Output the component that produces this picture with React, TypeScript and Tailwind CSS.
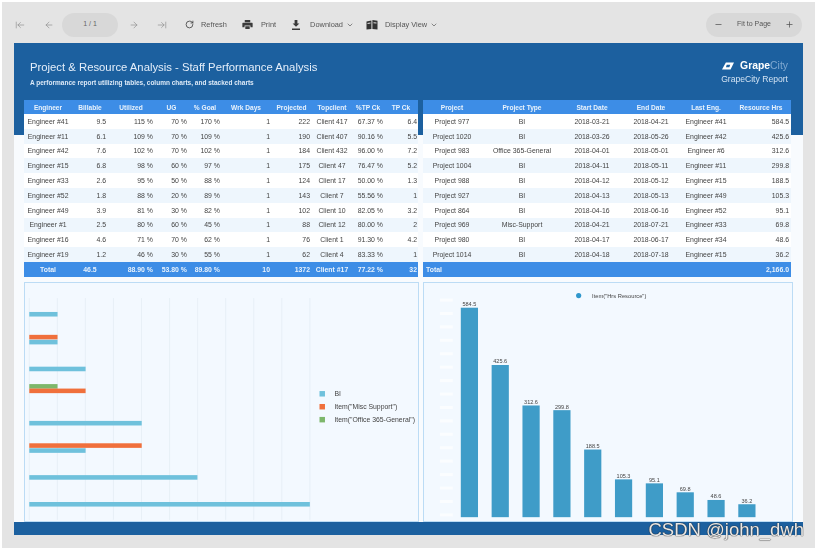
import { ArrowLeft, ArrowLeftToLine, ArrowRight, ArrowRightToLine, ChevronDown, Minus, Plus, RotateCw } from "lucide-react";

const leftCols = "grid grid-cols-[48px_36px_46px_35px_32px_50px_41px_40px_32px_34px]";
const rightCols = "grid grid-cols-[58px_82px_58px_60px_50px_60px]";

const engineers = [
  ["Engineer #41", "9.5", "115 %", "70 %", "170 %", "1", "222", "Client 417", "67.37 %", "6.4"],
  ["Engineer #11", "6.1", "109 %", "70 %", "109 %", "1", "190", "Client 407", "90.16 %", "5.5"],
  ["Engineer #42", "7.6", "102 %", "70 %", "102 %", "1", "184", "Client 432", "96.00 %", "7.2"],
  ["Engineer #15", "6.8", "98 %", "60 %", "97 %", "1", "175", "Client 47", "76.47 %", "5.2"],
  ["Engineer #33", "2.6", "95 %", "50 %", "88 %", "1", "124", "Client 17", "50.00 %", "1.3"],
  ["Engineer #52", "1.8", "88 %", "20 %", "89 %", "1", "143", "Client 7", "55.56 %", "1"],
  ["Engineer #49", "3.9", "81 %", "30 %", "82 %", "1", "102", "Client 10", "82.05 %", "3.2"],
  ["Engineer #1", "2.5", "80 %", "60 %", "45 %", "1", "88", "Client 12", "80.00 %", "2"],
  ["Engineer #16", "4.6", "71 %", "70 %", "62 %", "1", "76", "Client 1", "91.30 %", "4.2"],
  ["Engineer #19", "1.2", "46 %", "30 %", "55 %", "1", "62", "Client 4", "83.33 %", "1"],
];

const projects = [
  ["Project 977", "BI", "2018-03-21", "2018-04-21", "Engineer #41", "584.5"],
  ["Project 1020", "BI", "2018-03-26", "2018-05-26", "Engineer #42", "425.6"],
  ["Project 983", "Office 365-General", "2018-04-01", "2018-05-01", "Engineer #6", "312.6"],
  ["Project 1004", "BI", "2018-04-11", "2018-05-11", "Engineer #11", "299.8"],
  ["Project 988", "BI", "2018-04-12", "2018-05-12", "Engineer #15", "188.5"],
  ["Project 927", "BI", "2018-04-13", "2018-05-13", "Engineer #49", "105.3"],
  ["Project 864", "BI", "2018-04-16", "2018-06-16", "Engineer #52", "95.1"],
  ["Project 969", "Misc-Support", "2018-04-21", "2018-07-21", "Engineer #33", "69.8"],
  ["Project 980", "BI", "2018-04-17", "2018-06-17", "Engineer #34", "48.6"],
  ["Project 1014", "BI", "2018-04-18", "2018-07-18", "Engineer #15", "36.2"],
];

const leftHead = ["Engineer", "Billable", "Utilized", "UG", "% Goal", "Wrk Days", "Projected", "Topclient", "%TP Ck", "TP Ck"];
const rightHead = ["Project", "Project Type", "Start Date", "End Date", "Last Eng.", "Resource Hrs"];
const leftAlign = ["text-center", "text-right pr-[2px]", "text-right pr-[1px]", "text-right pr-[2px]", "text-right pr-[1px]", "text-right pr-[1px]", "text-right pr-[2px]", "text-center", "text-right pr-[1px]", "text-right pr-[1px]"];
const rightAlign = ["text-center", "text-center", "text-center", "text-center", "text-center", "text-right pr-[2px]"];

const hbars = [
  { y: 311, w: 28.4, c: "#6fc1dc" },
  { y: 334, w: 28.4, c: "#f0703c" },
  { y: 339, w: 28.4, c: "#6fc1dc" },
  { y: 366, w: 56.6, c: "#6fc1dc" },
  { y: 383.5, w: 28.4, c: "#7db76b" },
  { y: 388, w: 56.6, c: "#f0703c" },
  { y: 420.5, w: 113, c: "#6fc1dc" },
  { y: 443, w: 113, c: "#f0703c" },
  { y: 448, w: 56.6, c: "#6fc1dc" },
  { y: 475, w: 169, c: "#6fc1dc" },
  { y: 502, w: 282, c: "#6fc1dc" },
];

const vbars = [
  { x: 460, top: 306.7, label: "584.5" },
  { x: 491, top: 364.3, label: "425.6" },
  { x: 522, top: 405, label: "312.6" },
  { x: 553, top: 409.7, label: "299.8" },
  { x: 584, top: 449.3, label: "188.5" },
  { x: 615, top: 479.3, label: "105.3" },
  { x: 646, top: 483.3, label: "95.1" },
  { x: 677, top: 492.3, label: "69.8" },
  { x: 708, top: 500, label: "48.6" },
  { x: 739, top: 504.3, label: "36.2" },
];

function PrinterIcon() {
  return (
    <svg width="11" height="11" viewBox="0 0 12 12" fill="#3a3a3a">
      <path d="M3 1h6v2.5H3zM1 4.2h10a.6.6 0 0 1 .6.6V9H9.2V7.2H2.8V9H.4V4.8a.6.6 0 0 1 .6-.6zM3.6 8h4.8v3H3.6z" />
    </svg>
  );
}

function DownloadIcon() {
  return (
    <svg width="10" height="12" viewBox="0 0 10 12" fill="#3a3a3a">
      <path d="M3.6 1h2.8v3.4H8.4L5 7.8 1.6 4.4h2zM1 9.6h8V11H1z" />
    </svg>
  );
}

function ViewIcon() {
  return (
    <svg width="12" height="11" viewBox="0 0 12 11" fill="#333">
      <path d="M0.5 2.5 5.4 1.5V10L0.5 10.5zM6.4 1 11.5 1.8V10.5L6.4 10zM1.5 4v1l3-.4v-1zM7.5 3.2v1l3 .3v-1z" fillRule="evenodd" />
    </svg>
  );
}

function Toolbar() {
  return (
    <div className="flex h-[41px] items-center pl-[13px] pr-[13px] pt-[4px] text-[7.4px] text-[#555] blur-[0.5px]">
      <ArrowLeftToLine size={10} className="mr-[19px] text-[#888]" strokeWidth={1.5} />
      <ArrowLeft size={10} className="mr-[8px] text-[#888]" strokeWidth={1.5} />
      <div className="mr-[11px] flex h-[24px] w-[56px] items-center justify-center rounded-full bg-[#d8d8d8] text-[7px] text-[#666]">1 / 1</div>
      <ArrowRight size={10} className="mr-[18px] text-[#888]" strokeWidth={1.5} />
      <ArrowRightToLine size={10} className="mr-[18px] text-[#888]" strokeWidth={1.5} />
      <RotateCw size={9} className="mr-[7px] text-[#333]" strokeWidth={2} />
      <span className="mr-[15px]">Refresh</span>
      <PrinterIcon />
      <span className="ml-[8px] mr-[15px]">Print</span>
      <DownloadIcon />
      <span className="ml-[9px]">Download</span>
      <ChevronDown size={8} className="ml-[3px] mr-[12px]" strokeWidth={2} />
      <ViewIcon />
      <span className="ml-[7px]">Display View</span>
      <ChevronDown size={8} className="ml-[3px]" strokeWidth={2} />
      <div className="ml-auto flex h-[24px] w-[96px] items-center justify-between rounded-full bg-[#d8d8d8] px-[8px] text-[7px] text-[#555]">
        <Minus size={9} strokeWidth={2} />
        <span>Fit to Page</span>
        <Plus size={9} strokeWidth={2} />
      </div>
    </div>
  );
}

function Banner() {
  return (
    <div className="flex h-[92px] items-start justify-between bg-[#1c609f] pl-[16px] pr-[15px] pt-[17px] text-white">
      <div>
        <div className="text-[11.3px] leading-[14px] text-[#e4eefa]">Project &amp; Resource Analysis - Staff Performance Analysis</div>
        <div className="mt-[5px] text-[6.5px] font-bold leading-[8px] text-[#dce9f7]">A performance report utilizing tables, column charts, and stacked charts</div>
      </div>
      <div className="flex flex-col items-end">
        <div className="flex items-center gap-[6px] text-[10.4px] font-bold leading-[12px]">
          <svg width="12" height="8" viewBox="0 0 14 8" fill="white">
            <path d="M4.5 0H14L10 8H0zM5.5 2.4 4.6 5.6H8.6L9.6 2.4z" fillRule="evenodd" />
          </svg>
          <span>Grape<span className="font-normal text-[#7fa8d0]">City</span></span>
        </div>
        <div className="mt-[2px] text-[8.6px] leading-[10px] text-[#d3e3f3]">GrapeCity Report</div>
      </div>
    </div>
  );
}

function LeftTable() {
  return (
    <div className="w-[394px] bg-white text-[6.9px] text-[#444]">
      <div className={`${leftCols} h-[14px] items-center bg-[#3d8de6] pt-[1px] text-[6.6px] font-bold text-[#e8f2fc]`}>
        {leftHead.map((h) => <div key={h} className="text-center whitespace-nowrap">{h}</div>)}
      </div>
      {engineers.map((row, i) => (
        <div key={row[0]} className={`${leftCols} h-[14.8px] items-center pt-[1px] ${i % 2 ? "bg-[#eef6fd]" : "bg-white"}`}>
          {row.map((v, j) => <div key={j} className={`${leftAlign[j]} whitespace-nowrap`}>{v}</div>)}
        </div>
      ))}
      <div className={`${leftCols} h-[15px] items-center bg-[#3d8de6] pt-[1px] text-[6.9px] font-bold text-[#e8f2fc]`}>
        <div className="text-center">Total</div>
        <div className="text-center">46.5</div>
        <div className="text-right pr-[1px]">88.90 %</div>
        <div className="text-right pr-[2px]">53.80 %</div>
        <div className="text-right pr-[1px]">89.80 %</div>
        <div className="text-right pr-[1px]">10</div>
        <div className="text-right pr-[2px]">1372</div>
        <div className="text-center whitespace-nowrap">Client #17</div>
        <div className="text-right pr-[1px]">77.22 %</div>
        <div className="text-right pr-[1px]">32</div>
      </div>
    </div>
  );
}

function RightTable() {
  return (
    <div className="w-[368px] bg-white text-[6.9px] text-[#444]">
      <div className={`${rightCols} h-[14px] items-center bg-[#3d8de6] pt-[1px] text-[6.6px] font-bold text-[#e8f2fc]`}>
        {rightHead.map((h) => <div key={h} className="text-center whitespace-nowrap">{h}</div>)}
      </div>
      {projects.map((row, i) => (
        <div key={row[0]} className={`${rightCols} h-[14.8px] items-center pt-[1px] ${i % 2 ? "bg-[#eef6fd]" : "bg-white"}`}>
          {row.map((v, j) => <div key={j} className={`${rightAlign[j]} whitespace-nowrap`}>{v}</div>)}
        </div>
      ))}
      <div className="flex h-[15px] items-center justify-between bg-[#3d8de6] pl-[3px] pr-[2px] pt-[1px] text-[6.9px] font-bold text-[#e8f2fc]">
        <span>Total</span>
        <span>2,166.0</span>
      </div>
    </div>
  );
}

function BarChart() {
  // viewBox is in page coordinates so the numbers read off the picture directly
  return (
    <svg className="h-full w-full" viewBox="24 282 395 239" fontFamily="Liberation Sans, sans-serif">
      {Array.from({ length: 11 }, (_, n) => (
        <line key={n} x1={28.3 + n * 28.2} x2={28.3 + n * 28.2} y1="297" y2="520" stroke="#e4edf5" strokeWidth="0.8" />
      ))}
      {hbars.map((b, i) => <rect key={i} x="28.3" y={b.y} width={b.w} height="4.6" fill={b.c} />)}
      <rect x="320" y="390.5" width="5.5" height="5.5" fill="#6fc1dc" />
      <rect x="320" y="403.5" width="5.5" height="5.5" fill="#f0703c" />
      <rect x="320" y="416.5" width="5.5" height="5.5" fill="#7db76b" />
      <g fontSize="6.9" fill="#444">
        <text x="335" y="395.5">BI</text>
        <text x="335" y="408.5">Item("Misc Support")</text>
        <text x="335" y="421.5">Item("Office 365-General")</text>
      </g>
    </svg>
  );
}

function ColumnChart() {
  return (
    <svg className="h-full w-full" viewBox="423 282 370 239" fontFamily="Liberation Sans, sans-serif">
      {Array.from({ length: 17 }, (_, n) => (
        <line key={n} x1="439" x2="452" y1={299 + n * 13.5} y2={299 + n * 13.5} stroke="#fbfdff" strokeWidth="3" />
      ))}
      <circle cx="578.5" cy="294.5" r="2.6" fill="#2f97cc" />
      <text x="592" y="297" fontSize="5.8" fill="#444">Item("Hrs Resource")</text>
      {vbars.map((b) => (
        <g key={b.label}>
          <rect x={b.x} y={b.top} width="17.3" height={517.3 - b.top} fill="#3f9cc8" />
          <text x={b.x + 8.6} y={b.top - 1.5} fontSize="5.6" fill="#444" textAnchor="middle">{b.label}</text>
        </g>
      ))}
    </svg>
  );
}

export default function App() {
  return (
    <div className="h-[551px] w-[817px] bg-white p-[2px] pb-[3px] font-['Liberation_Sans',sans-serif]">
      <div className="relative h-full w-[813px] bg-[#e4e4e4]">
        <Toolbar />
        <div className="ml-[12px] w-[789px] bg-[#f8fbfe] blur-[0.6px]">
          <Banner />
          <div className="-mt-[35px] flex gap-[5px] pl-[10px]">
            <LeftTable />
            <RightTable />
          </div>
          <div className="mt-[5px] flex h-[240px] gap-[4px] pl-[10px]">
            <div className="h-full w-[395px] border border-[#bcdcf5] bg-[#f3f9ff]"><BarChart /></div>
            <div className="h-full w-[370px] border border-[#bcdcf5] bg-[#f3f9ff]"><ColumnChart /></div>
          </div>
          <div className="h-[13px] bg-[#1c609f]" />
        </div>
        <div className="absolute bottom-[8px] right-[11px] text-[18.5px] leading-[20px] text-[#e8e8e8] [text-shadow:0_0_1px_#222,0_0_1px_#222]">CSDN @john_dwh</div>
      </div>
    </div>
  );
}
